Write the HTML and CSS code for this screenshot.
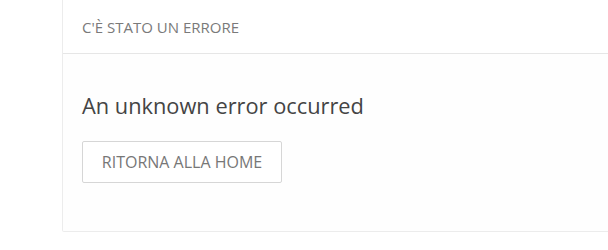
FILE: index.html
```html
<!DOCTYPE html>
<html>
<head>
<meta charset="utf-8">
<link rel="stylesheet" href="styles.css">
</head>
<body>
<div class="page">
  <section class="panel">
    <header class="panel-head">C'È STATO UN ERRORE</header>
    <div class="panel-body">
      <h1 class="title">An unknown error occurred</h1>
      <button class="btn">RITORNA ALLA HOME</button>
    </div>
  </section>
</div>
</body>
</html>
```
FILE: styles.css
```css
html, body {
  margin: 0;
  padding: 0;
  background: #ffffff;
  font-family: "Open Sans", "Noto Sans", "DejaVu Sans", sans-serif;
  overflow: hidden;
}
.page {
  padding-left: 62px;
  width: 700px;
}
.panel {
  background: #fefefe;
  border: 1px solid #ececec;
  border-top: none;
  border-radius: 0 0 0 2px;
}
.panel-head {
  height: 53px;
  border-bottom: 1px solid #e6e6e6;
  display: flex;
  align-items: center;
  padding-left: 19px;
  font-size: 15px;
  color: #7a7a7a;
  background: #ffffff;
}
.panel-body {
  padding: 39px 19px 48px;
}
.title {
  margin: 0 0 22px;
  font-weight: 400;
  font-size: 21.8px;
  line-height: 26px;
  color: #444;
}
.btn {
  display: block;
  width: 200px;
  height: 42px;
  background: #fff;
  border: 1px solid #d6d6d6;
  border-radius: 2px;
  font-family: inherit;
  font-size: 16px;
  color: #777;
  padding: 0;
}
```
